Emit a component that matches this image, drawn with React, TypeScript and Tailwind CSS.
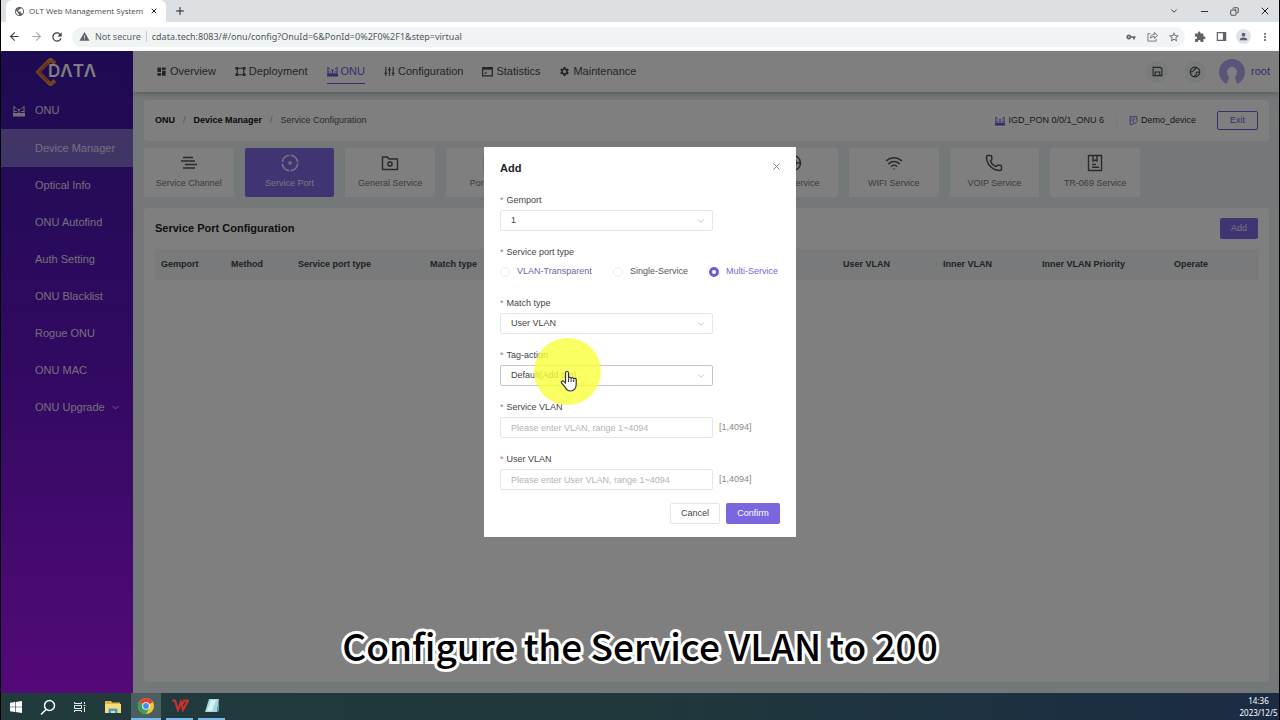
import React, { useState } from "react";
import {
  ArrowLeft,
  ArrowRight,
  ChevronDown,
  Copy,
  Globe,
  Minus,
  Phone,
  Plus,
  Wifi,
  X,
} from "lucide-react";
import {
  MdDashboard,
  MdExtension,
  MdMoreVert,
  MdOutlineStarBorder,
  MdPerson,
  MdPublic,
  MdRefresh,
  MdSettings,
  MdVpnKey,
  MdWarning,
} from "react-icons/md";

interface IconProps {
  className?: string;
}

const OnuIcon: React.FC<IconProps> = ({ className }) => (
  <svg viewBox="0 0 12 12" className={className} fill="none" stroke="currentColor">
    <path d="M1 1v6.500M11 1v6.500M6 4v4" strokeWidth="1.1" />
    <path d="M1.500 2l2 1.500M10.500 2l-2 1.500M4.500 4.500h3" strokeWidth="1" />
    <path d="M0 8h12v3.500H0z" fill="currentColor" stroke="none" />
    <path d="M1 6.500h3M8 6.500h3" strokeWidth="0.900" />
  </svg>
);

const DeployIcon: React.FC<IconProps> = ({ className }) => (
  <svg viewBox="0 0 12 12" className={className} fill="none" stroke="currentColor">
    <path d="M2.500 2.500h7v7h-7z" strokeWidth="1.2" />
    <path d="M0.500 1h3v3h-3zM8.500 1h3v3h-3zM0.500 8h3v3h-3zM8.500 8h3v3h-3z" fill="currentColor" stroke="none" />
  </svg>
);

const SlidersIcon: React.FC<IconProps> = ({ className }) => (
  <svg viewBox="0 0 12 12" className={className} fill="none" stroke="currentColor" strokeWidth="1.2">
    <path d="M2 1v10M6 1v10M10 1v10M0.500 8h3M4.500 4h3M8.500 8h3" />
  </svg>
);

const StatsIcon: React.FC<IconProps> = ({ className }) => (
  <svg viewBox="0 0 12 12" className={className} fill="none" stroke="currentColor">
    <path d="M0.700 1.700h10.600v9H0.700z" strokeWidth="1.3" />
    <path d="M1 3h10" strokeWidth="2" />
    <path d="M3 8.500l2-2" strokeWidth="1.2" />
  </svg>
);

const ChannelIcon: React.FC<IconProps> = ({ className }) => (
  <svg viewBox="0 0 18 18" className={className} fill="none" stroke="currentColor" strokeWidth="1.4">
    <path d="M3 3.500h10M1 7h14M5 10.500h12M3 14h12" />
  </svg>
);

const PortIcon: React.FC<IconProps> = ({ className }) => (
  <svg viewBox="0 0 18 18" className={className} fill="none" stroke="currentColor" strokeWidth="1.6">
    <circle cx="9" cy="9" r="7.700" strokeDasharray="10.600 1.500" strokeDashoffset="-0.700" />
    <circle cx="9" cy="9" r="1.700" fill="currentColor" stroke="none" />
  </svg>
);

const FolderGearIcon: React.FC<IconProps> = ({ className }) => (
  <svg viewBox="0 0 18 18" className={className} fill="none" stroke="currentColor" strokeWidth="1.4">
    <path d="M1.500 3h5l1.500 2h8.500v10.500h-15z" />
    <circle cx="9" cy="10" r="2" />
    <path d="M9 7v1M9 12v1M6.500 8.600l.8.5M10.700 10.900l.8.5M11.500 8.600l-.8.5M7.300 10.900l-.8.5" strokeWidth="1" />
  </svg>
);

const BookIcon: React.FC<IconProps> = ({ className }) => (
  <svg viewBox="0 0 18 18" className={className} fill="none" stroke="currentColor" strokeWidth="1.4">
    <path d="M2.500 1.500h13v15h-13zM7 2v5l2-1 2 1V2M6 10.500h4M6 13.200h7" />
  </svg>
);

const NoteIcon: React.FC<IconProps> = ({ className }) => (
  <svg viewBox="0 0 12 12" className={className} fill="none" stroke="currentColor" strokeWidth="1.2">
    <path d="M6 11H1.500V1h9v5M3.500 4h5M3.500 6.500h3M5.500 8l2 2.500 4-4" />
  </svg>
);

const SaveIcon: React.FC<IconProps> = ({ className }) => (
  <svg viewBox="0 0 12 12" className={className} fill="none" stroke="currentColor" strokeWidth="1.2">
    <path d="M1.200 1.500h8l1.600 1.600v7.400H1.200zM3.500 10.500v-4h5v4" />
  </svg>
);

const navItems = [
  { label: "Overview", icon: MdDashboard },
  { label: "Deployment", icon: DeployIcon },
  { label: "ONU", icon: OnuIcon, active: true },
  { label: "Configuration", icon: SlidersIcon },
  { label: "Statistics", icon: StatsIcon },
  { label: "Maintenance", icon: MdSettings },
];

const sideItems = [
  "Device Manager",
  "Optical Info",
  "ONU Autofind",
  "Auth Setting",
  "ONU Blacklist",
  "Rogue ONU",
  "ONU MAC",
  "ONU Upgrade",
];

const services = [
  { label: "Service Channel", icon: ChannelIcon },
  { label: "Service Port", icon: PortIcon, active: true },
  { label: "General Service", icon: FolderGearIcon },
  { label: "Port VLAN", icon: BookIcon },
  { label: "Multicast", icon: Globe },
  { label: "Port Config", icon: Globe },
  { label: "WAN Service", icon: Globe },
  { label: "WIFI Service", icon: Wifi },
  { label: "VOIP Service", icon: Phone },
  { label: "TR-069 Service", icon: BookIcon },
];

const columns = [
  { label: "Gemport", width: "w-[70px]" },
  { label: "Method", width: "w-[67px]" },
  { label: "Service port type", width: "w-[132px]" },
  { label: "Match type", width: "w-[100px]" },
  { label: "Match value", width: "w-[100px]" },
  { label: "Tag-action", width: "w-[107px]" },
  { label: "Service VLAN", width: "w-[106px]" },
  { label: "User VLAN", width: "w-[100px]" },
  { label: "Inner VLAN", width: "w-[99px]" },
  { label: "Inner VLAN Priority", width: "w-[132px]" },
  { label: "Operate", width: "" },
];

const BrowserBar: React.FC = () => (
  <div className="font-['Noto_Sans',sans-serif] text-[#5f6368]">
    <div className="flex h-[22px] items-center bg-[#dce0e2] pl-[5px]">
      <div className="flex h-full w-[160px] items-center rounded-t-md bg-white px-[8px]">
        <MdPublic className="size-[11px]" />
        <span className="ml-[4px] flex-1 font-['Open_Sans',sans-serif] text-[8px] whitespace-nowrap text-[#45494d]">
          OLT Web Management System
        </span>
        <button aria-label="Close tab">
          <X className="size-[8px] text-[#202124]" strokeWidth={3} />
        </button>
      </div>
      <button aria-label="New tab" className="ml-[8px]">
        <Plus className="size-[12px] text-[#202124]" />
      </button>
      <div className="ml-auto flex items-center gap-[20px] pr-[8px] text-[#202124]">
        <ChevronDown className="size-[10px]" />
        <Minus className="size-[11px]" />
        <Copy className="size-[9px] -scale-x-100" />
        <X className="size-[12px]" />
      </div>
    </div>
    <div className="flex h-[29px] items-center bg-white pr-[8px] pl-[7px]">
      <button aria-label="Back"><ArrowLeft className="size-[13px] text-[#3c4043]" /></button>
      <button aria-label="Forward" className="ml-[9px]"><ArrowRight className="size-[13px] text-[#a5a9ad]" /></button>
      <button aria-label="Reload" className="ml-[7px]"><MdRefresh className="size-[14px] text-[#3c4043]" /></button>
      <div className="ml-[8px] flex h-[20px] flex-1 items-center rounded-full bg-[#f0f4f4] pr-[5px] pl-[7px]">
        <MdWarning className="size-[11px]" />
        <span className="ml-[5px] text-[9px] whitespace-nowrap">Not secure</span>
        <span className="mx-[5px] h-[11px] w-px bg-[#c8cccf]" />
        <input
          aria-label="Address"
          className="min-w-0 flex-1 bg-transparent text-[9px] text-[#54585c] outline-none"
          defaultValue="cdata.tech:8083/#/onu/config?OnuId=6&PonId=0%2F0%2F1&step=virtual"
        />
        <MdVpnKey className="size-[10px]" />
        <svg viewBox="0 0 12 12" className="ml-[11px] size-[11px]" fill="none" stroke="currentColor">
          <path d="M3.500 3H1v8h9V8.500M3.500 8c.3-3 2-4.200 4.500-4.200V1.500L11.500 5 8 8V6C6 6 4.700 6.500 3.500 8z" strokeWidth="0.900" />
        </svg>
        <MdOutlineStarBorder className="ml-[10px] size-[12px]" />
      </div>
      <MdExtension className="ml-[9px] size-[12px]" />
      <svg viewBox="0 0 12 12" className="ml-[10px] size-[11px]" fill="none" stroke="currentColor">
        <path d="M1.500 1.700h9v8.600h-9z" strokeWidth="1.400" />
        <path d="M7.500 2h3v8h-3z" fill="currentColor" stroke="none" />
      </svg>
      <span className="ml-[9px] flex size-[15px] items-center justify-center rounded-full bg-[#dfe1ea]">
        <MdPerson className="size-[11px]" />
      </span>
      <MdMoreVert className="ml-[8px] size-[12px]" />
    </div>
  </div>
);

const Sidebar: React.FC = () => (
  <aside className="w-[132px] shrink-0 bg-linear-to-b from-[#3a16a4] via-[#6412c4] to-[#a812f0] text-[11px] text-[#e6dff5]">
    <div className="flex h-[41px] items-center pl-[35px]" role="img" aria-label="C-DATA">
      <svg viewBox="0 0 28 28" className="size-[28px]" fill="none">
        <path d="M19 5.500L14.500 1.500L2 14l12.500 12.500L19 22.500" stroke="#e8823c" strokeWidth="4" />
        <path d="M12 4.500L3 14l9 9.500" stroke="#b95a30" strokeWidth="1.500" />
      </svg>
      <span className="-ml-[16px] font-['Inter',sans-serif] text-[17px] font-semibold text-white">DΛTΛ</span>
    </div>
    <a href="#onu" className="flex h-[37px] items-center pl-[12px]">
      <OnuIcon className="size-[12px]" />
      <span className="ml-[10px]">ONU</span>
    </a>
    <nav>
      {sideItems.map((item, i) => (
        <a
          key={item}
          href="#onu"
          className={i === 0 ? "flex h-[38px] items-center bg-[#836bd0] pl-[34px]" : "flex h-[37px] items-center pl-[34px]"}
        >
          {item}
          {item === "ONU Upgrade" && <ChevronDown className="ml-[5px] size-[11px]" />}
        </a>
      ))}
    </nav>
  </aside>
);

const Header: React.FC = () => (
  <header className="relative flex h-[41px] shrink-0 items-center bg-white pr-[9px] pl-[23px] text-[11px] text-[#4a4a4a] shadow-[0_2px_5px_rgba(0,30,30,0.25)]">
    <nav className="flex gap-[19px]">
      {navItems.map(({ label, icon: Icon, active }) => (
        <a
          key={label}
          href="#nav"
          className={
            active
              ? "flex h-[24px] items-center gap-[3px] border-b border-[#7259d8] text-[#7259d8]"
              : "flex h-[24px] items-center gap-[3px]"
          }
        >
          <Icon className="size-[11px]" />
          {label}
        </a>
      ))}
    </nav>
    <div className="ml-auto flex items-center">
      <button aria-label="Save" className="flex size-[22px] items-center justify-center rounded-full bg-[#f5f8f9]">
        <SaveIcon className="size-[11px]" />
      </button>
      <button aria-label="Language" className="ml-[16px] flex size-[22px] items-center justify-center rounded-full bg-[#f5f8f9]">
        <svg viewBox="0 0 12 12" className="size-[12px]" fill="none" stroke="currentColor">
          <circle cx="6" cy="6" r="4.800" strokeWidth="1.200" />
          <path d="M1.500 5.500c2 1 3-.5 3.500-1.500s2-1 2.500-2.500M10.800 6.500c-2-1-4 0-3.500 1.500s-1.500 1-2 2.500" strokeWidth="1.100" />
        </svg>
      </button>
      <svg viewBox="0 0 26 26" className="ml-[13px] size-[26px]">
        <circle cx="13" cy="13" r="13" fill="#b7a9f0" />
        <path d="M13 8a5 5 0 0 1 5 5c0 2.500-1.500 4-2 5s2 4 2 8H8c0-4 2.500-7 2-8s-2-2.500-2-5a5 5 0 0 1 5-5z" fill="#fff" />
      </svg>
      <span className="ml-[6px] text-[#7259d8]">root</span>
    </div>
  </header>
);

const Content: React.FC = () => (
  <main className="flex flex-1 flex-col pt-[8px] pr-[10px] pb-[11px] pl-[11px]">
    <div className="flex h-[41px] items-center rounded-sm bg-white px-[11px] text-[9px] text-[#333]">
      <a href="#onu" className="font-bold text-[#111]">ONU</a>
      <span className="mx-[8px] text-[#aaa]">/</span>
      <a href="#onu" className="font-bold text-[#111]">Device Manager</a>
      <span className="mx-[8px] text-[#aaa]">/</span>
      <span className="text-[#555]">Service Configuration</span>
      <div className="ml-auto flex items-center">
        <OnuIcon className="mr-[3px] size-[10px] text-[#7259d8]" />
        IGD_PON 0/0/1_ONU 6
        <span className="mx-[12px] h-[12px] w-px bg-[#eee]" />
        <NoteIcon className="mr-[3px] size-[9px] text-[#7259d8]" />
        Demo_device
        <button className="ml-[21px] h-[19px] w-[41px] rounded-xs border border-[#7259d8] text-[#7259d8]">Exit</button>
      </div>
    </div>

    <div className="mt-[7px] grid grid-cols-10 gap-[11px] pr-[129px]">
      {services.map(({ label, icon: Icon, active }) => (
        <button
          key={label}
          className={
            active
              ? "flex h-[49px] flex-col items-center rounded-xs bg-[#8069e4] pt-[6px] text-[9px] text-[#efeaff]"
              : "flex h-[49px] flex-col items-center rounded-xs bg-white pt-[6px] text-[9px] text-[#777]"
          }
        >
          <Icon className={active ? "size-[18px]" : "size-[18px] text-[#555]"} />
          <span className="mt-[5px] whitespace-nowrap">{label}</span>
        </button>
      ))}
    </div>

    <section className="mt-[11px] flex-1 rounded-sm bg-white px-[11px] pt-[10px]">
      <div className="flex h-[21px] items-center justify-between">
        <h2 className="text-[11px] font-bold text-[#222]">Service Port Configuration</h2>
        <button className="h-[21px] w-[38px] rounded-xs bg-[#8069e4] text-[9px] text-[#efeaff]">Add</button>
      </div>
      <table className="mt-[10px] w-full table-fixed text-left text-[9px]">
        <thead>
          <tr className="h-[31px] bg-[#f0f5f6] text-[#444]">
            {columns.map((col) => (
              <th key={col.label} className={`${col.width} px-[6px] font-bold whitespace-nowrap`}>
                {col.label}
              </th>
            ))}
          </tr>
        </thead>
      </table>
    </section>
  </main>
);

interface FieldProps {
  id: string;
  label: string;
  children: React.ReactNode;
}

const Label: React.FC<{ text: string }> = ({ text }) => (
  <>
    <span className="mr-[3px] text-[#888]">*</span>
    {text}
  </>
);

const Field: React.FC<FieldProps> = ({ id, label, children }) => (
  <div>
    <label htmlFor={id} className="flex h-[20px] items-center pt-[2px]">
      <Label text={label} />
    </label>
    {children}
  </div>
);

const SelectBox: React.FC<{ id: string; option: string; hover?: boolean }> = ({ id, option, hover }) => (
  <div className="relative w-[213px]">
    <select
      id={id}
      className={
        hover
          ? "block h-[21px] w-full appearance-none rounded-xs border border-[#c4c4c4] bg-white pl-[10px] outline-none"
          : "block h-[21px] w-full appearance-none rounded-xs border border-[#e6e6e6] bg-white pl-[10px] outline-none"
      }
    >
      <option>{option}</option>
    </select>
    <ChevronDown className="pointer-events-none absolute top-[6px] right-[7px] size-[10px] text-[#bbb]" />
  </div>
);

const RangeInput: React.FC<{ id: string; placeholder: string }> = ({ id, placeholder }) => (
  <div className="flex items-center gap-[6px]">
    <input
      id={id}
      placeholder={placeholder}
      className="h-[21px] w-[213px] rounded-xs border border-[#e6e6e6] px-[10px] outline-none placeholder:text-[#b4b4b4]"
    />
    <span className="text-[#888]">[1,4094]</span>
  </div>
);

const portTypes = [
  { label: "VLAN-Transparent", color: "text-[#6f65a0]" },
  { label: "Single-Service", color: "text-[#555]" },
  { label: "Multi-Service", color: "text-[#7c66d8]" },
];

const AddDialog: React.FC = () => {
  const [portType, setPortType] = useState("Multi-Service");

  return (
    <div role="dialog" aria-label="Add" className="w-[312px] bg-white px-[16px] pb-[13px] text-[9px] text-[#444]">
      <div className="flex h-[43px] items-center justify-between">
        <h3 className="text-[11px] font-bold text-[#222]">Add</h3>
        <button aria-label="Close" className="-mr-[2px] pb-[4px]">
          <X className="size-[11px] text-[#777]" />
        </button>
      </div>

      <form className="flex flex-col gap-[11px]">
        <Field id="gemport" label="Gemport">
          <SelectBox id="gemport" option="1" />
        </Field>
        <fieldset>
          <legend className="flex h-[20px] items-center pt-[2px]">
            <Label text="Service port type" />
          </legend>
          <div className="grid h-[20px] grid-cols-[113px_96px_1fr] items-center">
            {portTypes.map(({ label, color }) => (
              <label key={label} className={`flex items-center gap-[7px] whitespace-nowrap ${color}`}>
                <input
                  type="radio"
                  name="port-type"
                  checked={portType === label}
                  onChange={() => setPortType(label)}
                  className="size-[10px] appearance-none rounded-full border border-[#eee] checked:border-[3px] checked:border-[#7259d8]"
                />
                {label}
              </label>
            ))}
          </div>
        </fieldset>
        <Field id="match-type" label="Match type">
          <SelectBox id="match-type" option="User VLAN" />
        </Field>
        <Field id="tag-action" label="Tag-action">
          <SelectBox id="tag-action" option="Default(Add tag)" hover />
        </Field>
        <Field id="service-vlan" label="Service VLAN">
          <RangeInput id="service-vlan" placeholder="Please enter VLAN, range 1~4094" />
        </Field>
        <Field id="user-vlan" label="User VLAN">
          <RangeInput id="user-vlan" placeholder="Please enter User VLAN, range 1~4094" />
        </Field>
      </form>

      <div className="mt-[13px] flex justify-end gap-[6px]">
        <button className="h-[21px] w-[50px] rounded-xs border border-[#e6e6e6]">Cancel</button>
        <button className="h-[21px] w-[54px] rounded-xs bg-[#7c66e0] text-white">Confirm</button>
      </div>
    </div>
  );
};

const Pointer: React.FC = () => (
  <div className="pointer-events-none absolute top-[287px] left-[533px] size-[67px] rounded-full bg-[#f8ff3a]/80">
    <svg viewBox="0 0 18 22" className="absolute top-[32px] left-[26px] h-[22px] w-[18px]">
      <path
        d="M5.500 13V3a1.500 1.500 0 0 1 3 0v5.500a1.300 1.300 0 0 1 2.600.3 1.300 1.300 0 0 1 2.600.5 1.200 1.200 0 0 1 2.500.7v4c0 3.500-1.700 7-5.700 7-3.500 0-4.500-2-5.500-4L1.500 13c-.8-1.500 1-2.700 2.200-1.600z"
        fill="#fff"
        stroke="#333"
        strokeWidth="1.200"
      />
      <path d="M8.500 8.500V12M11.100 9.200V12M13.700 9.700V12" stroke="#333" strokeWidth="1" />
    </svg>
  </div>
);

const Taskbar: React.FC = () => (
  <footer className="flex h-[27px] shrink-0 items-center bg-linear-to-r from-[#213a3c] via-[#20383c] to-[#1b2b44] text-white">
    <button aria-label="Start" className="flex w-[30px] justify-center">
      <svg viewBox="0 0 12 12" className="size-[12px]" fill="currentColor">
        <path d="M0 1.700l5-.7v4.700H0zM5.600.9L12 0v5.700H5.600zM0 6.300h5V11l-5-.7zM5.600 6.300H12V12l-6.400-.9z" />
      </svg>
    </button>
    <button aria-label="Search" className="flex w-[34px] justify-center">
      <svg viewBox="0 0 16 16" className="size-[16px]" fill="none" stroke="currentColor" strokeWidth="1.500">
        <circle cx="9.500" cy="6.500" r="5" />
        <path d="M6 10.500L1 15.500" />
      </svg>
    </button>
    <button aria-label="Task view" className="flex w-[30px] justify-center">
      <svg viewBox="0 0 12 12" className="size-[12px]" fill="none" stroke="currentColor" strokeWidth="0.900">
        <path d="M.5 1v1.500h7V1M.5 4.500h7v3h-7zM.5 11V9.500h7V11M10.500 1v2M10.500 6v5M9.500 4.500h2" />
      </svg>
    </button>
    <button aria-label="Explorer" className="flex w-[36px] justify-center">
      <svg viewBox="0 0 16 14" className="h-[14px] w-[16px]">
        <path d="M0 1h6l1.500 1.500H15V13H0z" fill="#e3b341" />
        <path d="M0 4h16v9H0z" fill="#f8dc78" />
        <path d="M3.500 13V8.500h9V13h-2.500v-2H6v2z" fill="#4f9bd0" />
      </svg>
    </button>
    <button aria-label="Chrome" className="flex h-full w-[30px] items-center justify-center border-b-2 border-[#7ab8ea] bg-[#4b5f62]">
      <svg viewBox="0 0 16 16" className="size-[16px]">
        <circle cx="8" cy="8" r="8" fill="#f3c734" />
        <path d="M8 8L1.070 4A8 8 0 0 0 8 16l3.500-6z" fill="#35a352" />
        <path d="M8 8L1.070 4A8 8 0 0 1 14.930 4z" fill="#dc4437" />
        <circle cx="8" cy="8" r="3.800" fill="#fff" />
        <circle cx="8" cy="8" r="2.900" fill="#4688f0" />
      </svg>
    </button>
    <button aria-label="WPS" className="ml-[5px] flex h-full w-[27px] items-center justify-center border-b-2 border-[#7ab8ea]">
      <svg viewBox="0 0 18 13" className="h-[13px] w-[18px]" fill="none" stroke="#c9302a" strokeWidth="2.200">
        <path d="M1 1.500h3L7 11l3-8 2 8L17 1.500h-4L11.500 5" />
      </svg>
    </button>
    <button aria-label="Notepad" className="ml-[5px] flex h-full w-[27px] items-center justify-center border-b-2 border-[#7ab8ea]">
      <svg viewBox="0 0 16 16" className="size-[16px]">
        <path d="M5 1h10l-2 13H1z" fill="#9fd8dc" />
        <path d="M7 2h5L8 13H3z" fill="#d7f1f2" />
        <path d="M13 14l2-13v12z" fill="#5e9fa6" />
      </svg>
    </button>
    <div className="ml-auto flex w-[41px] flex-col items-center font-['Noto_Sans',sans-serif] text-[8px] leading-[12px]">
      <span>14:36</span>
      <span>2023/12/5</span>
    </div>
  </footer>
);

const App: React.FC = () => {
  return (
    <div className="flex min-h-screen flex-col border-x border-black font-['Liberation_Sans',Arial,sans-serif]">
      <BrowserBar />
      <div className="relative flex flex-1">
        <Sidebar />
        <div className="flex min-w-0 flex-1 flex-col bg-[#e9f0f2]">
          <Header />
          <Content />
        </div>
        {/* modal mask */}
        <div className="absolute inset-0 flex items-start justify-center bg-black/50 pt-[96px]">
          <AddDialog />
        </div>
        <Pointer />
        <p className="absolute inset-x-0 bottom-[18px] text-center font-['Noto_Sans_CJK_SC',sans-serif] text-[37px] leading-[60px] font-medium text-black [-webkit-text-stroke:6px_white] [paint-order:stroke_fill]">
          Configure the Service VLAN to 200
        </p>
      </div>
      <Taskbar />
    </div>
  );
};

export default App;
